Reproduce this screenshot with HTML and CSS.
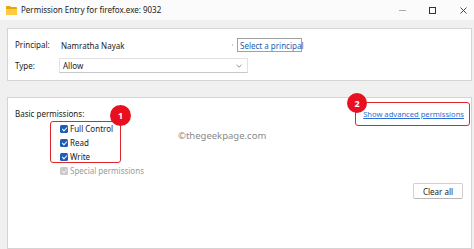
FILE: index.html
```html
<!DOCTYPE html>
<html>
<head>
<meta charset="utf-8">
<link rel="stylesheet" href="styles.css">
</head>
<body>
<div class="window">
  <div class="titlebar">
    <svg class="folder" width="11" height="9" viewBox="0 0 11 9">
      <path d="M0 1 Q0 0 1 0 H4 L5 1 H10 Q11 1 11 2 V8 Q11 9 10 9 H1 Q0 9 0 8 Z" fill="#e9a600"/>
      <path d="M0 3 H11 V8 Q11 9 10 9 H1 Q0 9 0 8 Z" fill="#ffcb45"/>
    </svg>
    <span class="title">Permission Entry for firefox.exe: 9032</span>
    <div class="controls">
      <span class="ctl min"></span>
      <span class="ctl max"></span>
      <span class="ctl close">
        <svg width="7" height="7" viewBox="0 0 7 7"><path d="M0.5 0.5 L6.5 6.5 M6.5 0.5 L0.5 6.5" stroke="#333" stroke-width="0.9"/></svg>
      </span>
    </div>
  </div>
  <div class="body">
    <div class="panel panel1">
      <div class="row">
        <span class="label">Principal:</span>
        <span class="value">Namratha Nayak</span>
        <span class="tick"></span>
        <span class="btn-select">Select a principal</span>
      </div>
      <div class="row">
        <span class="label">Type:</span>
        <div class="dropdown">
          <span>Allow</span>
          <svg width="6" height="4" viewBox="0 0 6 4"><path d="M0.5 0.8 L3 3.2 L5.5 0.8" fill="none" stroke="#777" stroke-width="0.8"/></svg>
        </div>
      </div>
    </div>
    <div class="panel panel2">
      <div class="head">
        <span class="head-label">Basic permissions:</span>
        <a class="link">Show advanced permissions</a>
      </div>
      <div class="list">
        <div class="item"><span class="cb on"></span>Full Control</div>
        <div class="item"><span class="cb on"></span>Read</div>
        <div class="item"><span class="cb on"></span>Write</div>
        <div class="item disabled"><span class="cb off"></span>Special permissions</div>
      </div>
      <div class="actions">
        <span class="btn">Clear all</span>
      </div>
      <div class="mark box1"></div>
      <div class="badge b1">1</div>
      <div class="mark box2"></div>
      <div class="badge b2">2</div>
      <div class="watermark">©thegeekpage.com</div>
    </div>
  </div>
</div>
</body>
</html>
```
FILE: styles.css
```css
* { box-sizing: border-box; }
html, body { margin: 0; padding: 0; }
body {
  width: 474px;
  height: 249px;
  overflow: hidden;
  font-family: "Noto Sans", "Open Sans", sans-serif;
  font-size: 8px;
  color: #1a1a1a;
  background: #f0f0f0;
}
.window { width: 474px; height: 249px; display: flex; flex-direction: column; }
.titlebar {
  height: 20px;
  background: #fbfbfb;
  display: flex;
  align-items: center;
  padding-left: 6px;
  flex-shrink: 0;
}
.folder { display: block; margin-right: 4px; }
.title { font-size: 8px; color: #222; line-height: 10px; }
.controls { margin-left: auto; display: flex; align-items: center; height: 20px; }
.ctl { display: block; }
.min { width: 7px; height: 1px; background: #aaa; margin-right: 23px; }
.max { width: 7px; height: 7px; border: 1px solid #333; margin-right: 24px; }
.close { width: 7px; height: 7px; margin-right: 7px; }
.close svg { display: block; }

.body { flex: 1; padding: 8px 2px 0 7px; display: flex; flex-direction: column; gap: 16px; }
.panel { background: #fff; border: 1px solid #d4d4d4; }
.panel1 { height: 53px; padding: 9px 7px 7px 7px; display: flex; flex-direction: column; gap: 6px; }
.row { display: flex; align-items: center; }
.row:first-child { height: 14px; }
.row:last-child { height: 15px; }
.label { width: 44px; flex-shrink: 0; line-height: 12px; }
.value { padding-left: 2px; width: 173px; }
.tick { width: 1px; height: 2px; background: #ccc; margin-right: 4px; }
.btn-select {
  height: 14px;
  width: 65px;
  border: 1px solid #a0a0a0;
  color: #1a5fb4;
  display: flex;
  align-items: center;
  padding-left: 2px;
  white-space: nowrap;
}
.dropdown {
  width: 189px;
  height: 15px;
  border: 1px solid #e2e2e2;
  border-bottom-color: #c8c8c8;
  display: flex;
  align-items: center;
  justify-content: space-between;
  padding: 0 5px 0 3px;
}
.dropdown svg { display: block; }

.panel2 { flex: 1; position: relative; padding: 10px 7px 0 7px; }
.head { display: flex; justify-content: space-between; align-items: center; height: 12px; }
.head-label { line-height: 12px; white-space: nowrap; }
.link { color: #2a6fd6; text-decoration: underline; font-size: 7.6px; line-height: 12px; }
.list { margin-top: 2px; padding-left: 45px; }
.item { height: 14px; display: flex; align-items: center; line-height: 12px; }
.cb { width: 8px; height: 8px; border-radius: 1.5px; margin-right: 2px; position: relative; }
.cb.on { background: #1a5fb4; }
.cb.off { background: #c9c9c9; }
.cb::after {
  content: "";
  position: absolute;
  left: 2.6px;
  top: 0.8px;
  width: 2px;
  height: 4.4px;
  border-right: 1.1px solid #fff;
  border-bottom: 1.1px solid #fff;
  transform: rotate(45deg);
}
.cb.off::after { border-color: #eee; }
.disabled { color: #9a9a9a; }
.actions { display: flex; justify-content: flex-end; margin-top: 5px; padding-right: 1px; }
.btn {
  width: 50px;
  height: 16px;
  border: 1px solid #d0d0d0;
  border-bottom-color: #b8b8b8;
  border-radius: 2px;
  display: flex;
  align-items: center;
  justify-content: center;
}

.mark { position: absolute; border: 1.5px solid #e0262c; border-radius: 3px; }
.box1 { left: 42px; top: 23px; width: 71px; height: 42px; }
.box2 { left: 347px; top: 4px; width: 115px; height: 24px; }
.badge {
  position: absolute;
  border-radius: 50%;
  background: #e8101f;
  color: #fff;
  font-weight: bold;
  font-size: 9px;
  display: flex;
  align-items: center;
  justify-content: center;
}
.b1 { left: 102px; top: 7px; width: 21px; height: 21px; }
.b2 { left: 339px; top: -5px; width: 20px; height: 20px; }
.watermark {
  position: absolute;
  left: 170px;
  top: 32px;
  font-size: 9.5px;
  line-height: 12px;
  color: #8a8a8a;
}
```
